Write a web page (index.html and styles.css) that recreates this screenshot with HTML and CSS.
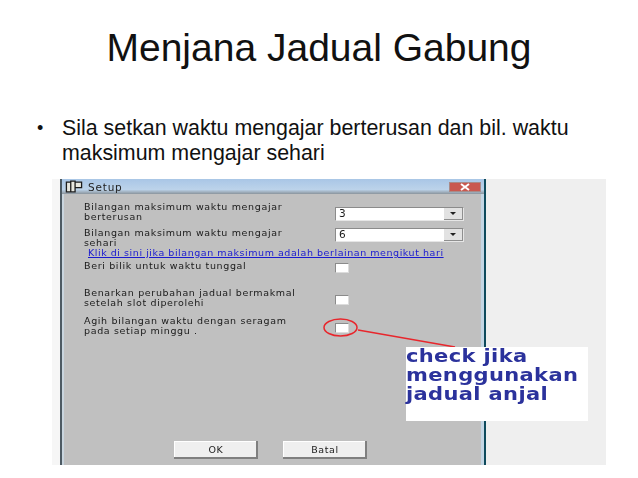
FILE: index.html
```html
<!DOCTYPE html>
<html lang="ms">
<head>
<meta charset="utf-8">
<title>Menjana Jadual Gabung</title>
<link rel="stylesheet" href="styles.css">
</head>
<body>
<main class="slide">
  <h1 class="title">Menjana Jadual Gabung</h1>
  <ul class="bullets">
    <li>Sila setkan waktu mengajar berterusan dan bil. waktu maksimum mengajar sehari</li>
  </ul>
  <div class="shot">
    <section class="dialog">
      <header class="titlebar">
        <svg class="app-icon" viewBox="0 0 16 12" width="18" height="13" aria-hidden="true">
          <path d="M1 2h4v9H1zM5 1h4v10H5zM9 2h6v5H9z" fill="#e8e8e0" stroke="#1c1c1c" stroke-width="1.2"/>
        </svg>
        <span class="titlebar-text">Setup</span>
        <span class="close">
          <svg viewBox="0 0 10 8" width="10" height="8" aria-hidden="true"><path d="M1 1l8 6M9 1l-8 6" stroke="#fff" stroke-width="2"/></svg>
        </span>
      </header>
      <div class="body">
        <div class="row row-a">
          <p class="label">Bilangan maksimum waktu mengajar<br>berterusan</p>
          <div class="combo"><span class="combo-val">3</span><span class="combo-btn"></span></div>
        </div>
        <div class="row row-b">
          <p class="label">Bilangan maksimum waktu mengajar<br>sehari</p>
          <div class="combo"><span class="combo-val">6</span><span class="combo-btn"></span></div>
        </div>
        <a class="link">Klik di sini jika bilangan maksimum adalah berlainan mengikut hari</a>
        <div class="row row-c">
          <p class="label">Beri bilik untuk waktu tunggal</p>
          <span class="check"></span>
        </div>
        <div class="row row-d">
          <p class="label">Benarkan perubahan jadual bermakmal<br>setelah slot diperolehi</p>
          <span class="check"></span>
        </div>
        <div class="row row-e">
          <p class="label">Agih bilangan waktu dengan seragam<br>pada setiap minggu .</p>
          <span class="check"></span>
        </div>
        <div class="actions">
          <button class="btn">OK</button>
          <button class="btn">Batal</button>
        </div>
      </div>
    </section>
    <svg class="callout" viewBox="0 0 140 40" width="140" height="40" aria-hidden="true">
      <ellipse cx="18.5" cy="10.5" rx="16.5" ry="8.5" fill="none" stroke="#e8262c" stroke-width="1.5"/>
      <path d="M36 13L133 30" stroke="#e8262c" stroke-width="1.3" fill="none"/>
    </svg>
    <div class="note"><span class="note-text">check jika<br>menggunakan<br>jadual anjal</span></div>
  </div>
</main>
</body>
</html>
```
FILE: styles.css
```css
html, body {
  margin: 0;
  padding: 0;
  background: #fff;
}
.slide {
  width: 638px;
  height: 478px;
  overflow: hidden;
  display: flex;
  flex-direction: column;
  font-family: "Liberation Sans", Arial, sans-serif;
  color: #111;
}
.title {
  margin: 26px 0 0;
  height: 44px;
  font-size: 39px;
  line-height: 44px;
  font-weight: 400;
  text-align: center;
}
.bullets {
  list-style: none;
  margin: 46px 0 0;
  padding: 0 60px 0 62px;
  font-size: 21.4px;
  line-height: 25px;
  position: relative;
}
.bullets li::before {
  content: "•";
  position: absolute;
  left: 37px;
  font-size: 18px;
}
.shot {
  margin: 13px 0 0 52px;
  width: 554px;
  height: 286px;
  background: linear-gradient(90deg, #f6f6f6 8px, #efefef 8px);
  position: relative;
  flex: none;
  padding-left: 8px;
  box-sizing: border-box;
}
.dialog {
  width: 426px;
  height: 286px;
  display: flex;
  flex-direction: column;
  box-sizing: border-box;
  border-right: 2px solid #0e4a5c;
  border-left: 2px solid #4d5a63;
  filter: blur(0.3px);
}
.titlebar {
  height: 15px;
  flex: none;
  display: flex;
  align-items: center;
  padding: 0 3px 0 3px;
  background: linear-gradient(#a9c6e6, #bcd3ea 70%, #8a949c);
  gap: 5px;
}
.titlebar-text {
  font: 10.5px/12px "DejaVu Sans", sans-serif;
  letter-spacing: 0.8px;
  color: #222;
  flex: 1;
}
.close {
  width: 32px;
  height: 10px;
  background: #c9584f;
  border: 1px solid #a98a88;
  box-sizing: border-box;
  display: flex;
  align-items: center;
  justify-content: center;
}
.body {
  flex: 1;
  background: #c0c0c0;
  border-left: 2px solid #c9d5de;
  border-right: 3px solid #c4d6e4;
  display: flex;
  flex-direction: column;
  padding: 0 15px 6px 20px;
  font: 9.5px/9.8px "DejaVu Sans", sans-serif;
  color: #1a1a1a;
}
.row {
  display: grid;
  grid-template-columns: 251px auto;
  align-items: start;
}
.label {
  margin: 0;
  white-space: nowrap;
  letter-spacing: 0.65px;
}
.row-a { margin-top: 8px; height: 26px; }
.row-b { height: 20px; }
.row-c { margin-top: 4px; height: 27px; }
.row-d { height: 28px; }
.row-e { height: 20px; }
.combo {
  width: 129px;
  height: 14px;
  background: #fff;
  border: 1px solid #8b8b8b;
  border-right-color: #e6e6e6;
  border-bottom-color: #e6e6e6;
  box-sizing: border-box;
  display: flex;
  align-items: center;
}
.row-a .combo { margin-top: 5px; }
.combo-val {
  flex: 1;
  padding-left: 3px;
  font-size: 10.5px;
}
.combo-btn {
  width: 19px;
  height: 12px;
  background: #e2e2e2;
  position: relative;
  box-shadow: inset -1px -1px 0 #8f8f8f;
}
.combo-btn::after {
  content: "";
  position: absolute;
  left: 6px;
  top: 4px;
  border: 3px solid transparent;
  border-top: 3px solid #222;
  border-bottom: 0;
}
.link {
  color: #1a1ad0;
  text-decoration: underline;
  font-size: 9.5px;
  letter-spacing: 0.55px;
  padding-left: 4px;
  white-space: nowrap;
  line-height: 9px;
}
.check {
  width: 14px;
  height: 10px;
  background: #fff;
  border: 1px solid #8b8b8b;
  border-right-color: #dcdcdc;
  border-bottom-color: #dcdcdc;
  box-sizing: border-box;
  display: block;
}
.row-c .check { margin-top: 2px; }
.row-d .check { margin-top: 7px; }
.row-e .check { margin-top: 7px; }
.actions {
  margin-top: auto;
  display: flex;
  gap: 25px;
  padding-left: 90px;
}
.btn {
  width: 84px;
  height: 18px;
  padding: 0;
  border: 0;
  background: #efefef;
  box-shadow: inset -2px -2px 0 #7f7f7f, inset 1px 1px 0 #fff;
  font: 9.5px/16px "DejaVu Sans", sans-serif;
  letter-spacing: 0.6px;
  color: #222;
}
.callout {
  position: absolute;
  left: 270px;
  top: 138px;
}
.note {
  position: absolute;
  left: 354px;
  top: 168px;
  width: 182px;
  height: 74px;
  background: #fff;
  box-sizing: border-box;
  font: 700 17.5px/19px "DejaVu Sans", sans-serif;
  color: #2b329c;
}
.note-text {
  display: inline-block;
  white-space: nowrap;
  letter-spacing: 0.3px;
  transform: scaleX(1.2);
  transform-origin: left top;
}
```
